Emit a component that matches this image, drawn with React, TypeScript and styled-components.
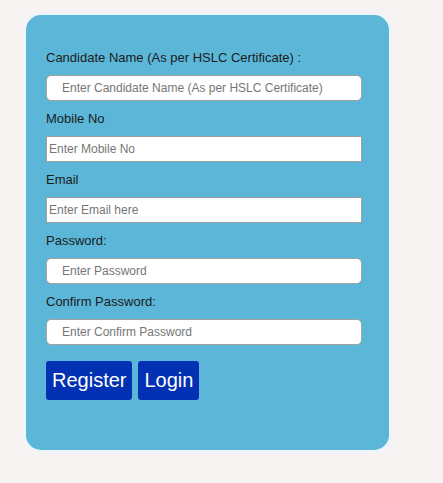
import React from "react";
import styled, { createGlobalStyle } from "styled-components";

const Global = createGlobalStyle`
  html, body { margin: 0; padding: 0; background: #f7f3f3; }
  body { font-family: "Liberation Sans", Arial, sans-serif; }
  * { box-sizing: border-box; }
`;

const Page = styled.div`
  padding: 12px 0 0 23px;
  min-height: 483px;
`;

const Card = styled.form`
  width: 369px;
  background: #5bb6d8;
  border: 3px solid #eef5fa;
  border-radius: 18px;
  padding: 34px 28px 50px 20px;
  display: flex;
  flex-direction: column;
`;

const Field = styled.div`
  display: flex;
  flex-direction: column;
  margin-bottom: 9px;
`;

const Label = styled.label`
  font-size: 13px;
  line-height: 16px;
  color: #1c1c1c;
  padding-top: 1px;
  margin-bottom: 9px;
`;

const Input = styled.input<{ $rounded?: boolean }>`
  width: 316px;
  height: 26px;
  background: #fff;
  font-family: "Liberation Sans", Arial, sans-serif;
  font-size: 12px;
  color: #333;
  outline: none;
  border: ${(p) => (p.$rounded ? "1px solid #a3a3a3" : "1px solid #a0a0a0")};
  border-radius: ${(p) => (p.$rounded ? "5px" : "0")};
  padding: ${(p) => (p.$rounded ? "0 0 0 15px" : "0 0 0 2px")};
  &::placeholder { color: #767676; }
`;

const Buttons = styled.div`
  display: flex;
  gap: 6px;
  margin-top: 7px;
`;

const Button = styled.button`
  height: 39px;
  background: #0231b3;
  color: #fff;
  border: none;
  border-radius: 3px;
  font-family: "Liberation Sans", Arial, sans-serif;
  font-size: 20px;
  padding: 0 6px;
  cursor: pointer;
`;

const fields = [
  { label: "Candidate Name (As per HSLC Certificate) :", ph: "Enter Candidate Name (As per HSLC Certificate)", rounded: true, type: "text" },
  { label: "Mobile No", ph: "Enter Mobile No", rounded: false, type: "text" },
  { label: "Email", ph: "Enter Email here", rounded: false, type: "email" },
  { label: "Password:", ph: "Enter Password", rounded: true, type: "password" },
  { label: "Confirm Password:", ph: "Enter Confirm Password", rounded: true, type: "password" },
];

export default function App() {
  return (
    <Page>
      <Global />
      <Card onSubmit={(e) => e.preventDefault()}>
        {fields.map((f) => (
          <Field key={f.label}>
            <Label>{f.label}</Label>
            <Input type={f.type} placeholder={f.ph} $rounded={f.rounded} />
          </Field>
        ))}
        <Buttons>
          <Button type="submit">Register</Button>
          <Button type="button">Login</Button>
        </Buttons>
      </Card>
    </Page>
  );
}
